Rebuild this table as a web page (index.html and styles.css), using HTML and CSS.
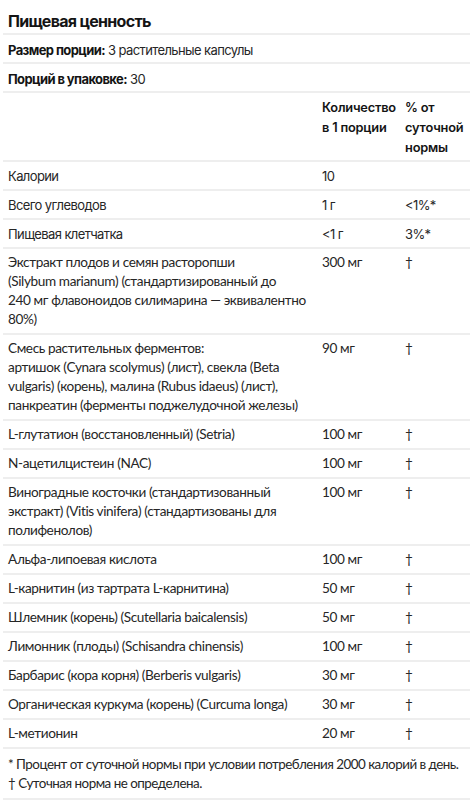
FILE: index.html
```html
<!DOCTYPE html>
<html lang="ru">
<head>
<meta charset="utf-8">
<title>Пищевая ценность</title>
<link rel="stylesheet" href="styles.css">
</head>
<body>
<div class="facts">
  <div class="title">Пищевая ценность</div>
  <div class="info"><b>Размер порции:</b> 3 растительные капсулы</div>
  <div class="info"><b>Порций в упаковке:</b> 30</div>
  <div class="row head">
    <div></div>
    <div>Количество в&nbsp;1&nbsp;порции</div>
    <div>% от суточной нормы</div>
  </div>
  <div class="row inter"><div>Калории</div><div>10</div><div></div></div>
  <div class="row inter"><div>Всего углеводов</div><div>1 г</div><div>&lt;1%*</div></div>
  <div class="row inter"><div>Пищевая клетчатка</div><div>&lt;1 г</div><div>3%*</div></div>
  <div class="row"><div>Экстракт плодов и семян расторопши (Silybum&nbsp;marianum) (стандартизированный до 240&nbsp;мг флавоноидов силимарина — эквивалентно 80%)</div><div>300 мг</div><div>†</div></div>
  <div class="row"><div>Смесь растительных ферментов:<br>артишок (Cynara scolymus) (лист), свекла (Beta vulgaris) (корень), малина (Rubus idaeus) (лист), панкреатин (ферменты поджелудочной железы)</div><div>90 мг</div><div>†</div></div>
  <div class="row"><div>L-глутатион (восстановленный) (Setria)</div><div>100 мг</div><div>†</div></div>
  <div class="row"><div>N-ацетилцистеин (NAC)</div><div>100 мг</div><div>†</div></div>
  <div class="row"><div>Виноградные косточки (стандартизованный экстракт) (Vitis vinifera) (стандартизованы для полифенолов)</div><div>100 мг</div><div>†</div></div>
  <div class="row"><div>Альфа-липоевая кислота</div><div>100 мг</div><div>†</div></div>
  <div class="row"><div>L-карнитин (из тартрата L-карнитина)</div><div>50 мг</div><div>†</div></div>
  <div class="row"><div>Шлемник (корень) (Scutellaria baicalensis)</div><div>50 мг</div><div>†</div></div>
  <div class="row"><div>Лимонник (плоды) (Schisandra chinensis)</div><div>100 мг</div><div>†</div></div>
  <div class="row"><div>Барбарис (кора корня) (Berberis vulgaris)</div><div>30 мг</div><div>†</div></div>
  <div class="row"><div>Органическая куркума (корень) (Curcuma longa)</div><div>30 мг</div><div>†</div></div>
  <div class="row"><div>L-метионин</div><div>20 мг</div><div>†</div></div>
  <div class="notes">
    <p>* Процент от суточной нормы при условии потребления 2000 калорий в день.</p>
    <p>† Суточная норма не определена.</p>
  </div>
</div>
</body>
</html>
```
FILE: styles.css
```css
html, body {
  margin: 0;
  padding: 0;
  background: #ffffff;
}
.facts {
  width: 474px;
  color: #262626;
  font-family: Inter, "Noto Sans", sans-serif;
  font-size: 13px;
  letter-spacing: -0.6px;
}
.title {
  font-size: 16px;
  font-weight: 700;
  letter-spacing: -0.7px;
  color: #141414;
  line-height: 24px;
  padding: 9px 5px 0;
  margin: 0 4px 0 3px;
  border-bottom: 2px solid #eeeeee;
}
.info {
  line-height: 20px;
  padding: 4.5px 5px 2.5px;
  margin: 0 4px 0 3px;
  border-bottom: 2px solid #eeeeee;
}
.info b {
  font-weight: 700;
  color: #141414;
}
.row {
  display: grid;
  grid-template-columns: 314px 83px 1fr;
  margin: 0 4px 0 3px;
  padding: 4px 5px 4px;
  border-bottom: 2px solid #eeeeee;
  font-family: Lato, "Noto Sans", sans-serif;
  font-size: 13.6px;
  letter-spacing: -0.38px;
  line-height: 19px;
}
.row > div:first-child {
  padding-right: 6px;
}
.row.inter {
  font-family: Inter, "Noto Sans", sans-serif;
  font-size: 13px;
  letter-spacing: -0.6px;
  line-height: 20px;
  padding: 3.5px 5px 3.5px;
}
.row.head {
  font-family: Inter, "Noto Sans", sans-serif;
  font-weight: 600;
  font-size: 12.8px;
  letter-spacing: -0.2px;
  line-height: 20px;
  padding: 5px 5px 2px;
  color: #141414;
}
.notes {
  margin: 0 4px 0 3px;
  padding: 6px 5px 5px;
  border-bottom: 2px solid #eeeeee;
  font-family: Lato, "Noto Sans", sans-serif;
  font-size: 13.4px;
  letter-spacing: -0.5px;
  line-height: 19px;
  white-space: nowrap;
}
.notes p {
  margin: 0;
}
```
